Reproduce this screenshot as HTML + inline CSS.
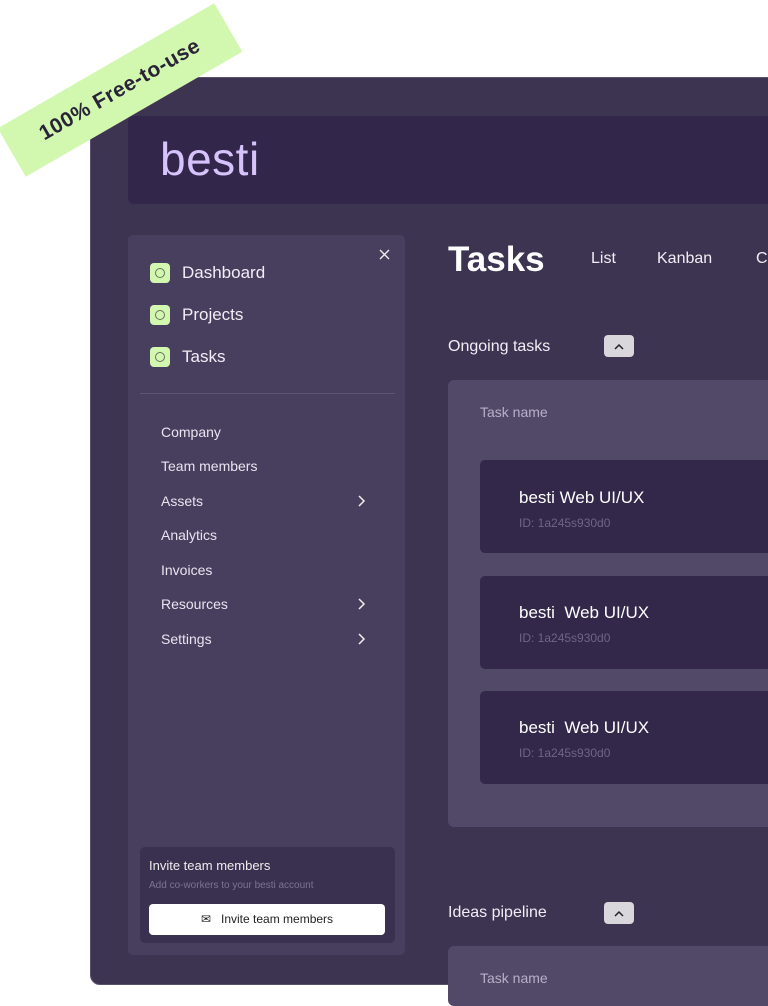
<!DOCTYPE html>
<html><head><style>
*{margin:0;padding:0;box-sizing:border-box}
body{width:768px;height:986px;background:#fff;position:relative;overflow:hidden;font-family:"Liberation Sans",sans-serif}
.a{position:absolute}
.frame{left:90px;top:77px;width:700px;height:908px;background:#3d3452;border-radius:10px;border:1px solid #5a5070}
.hdr{left:128px;top:116px;width:660px;height:88px;background:#32264a;border-radius:6px}
.logo{left:160px;top:132px;font-size:46px;color:#d7c3fb;letter-spacing:0.5px}
.side{left:128px;top:235px;width:277px;height:720px;background:#483f5e;border-radius:5px}
.ic{width:20px;height:20px;background:#d2f8b0;border-radius:4px;display:flex;align-items:center;justify-content:center}
.ic i{width:10px;height:10px;border:1.5px solid #6a7060;border-radius:50%;display:block}
.nav{color:#f1eef6;font-size:17px}
.sub{color:#e8e4f0;font-size:14px;left:161px}
.chev{left:356px}
.pan{left:448px;width:330px;background:#524868;border-radius:6px}
.card{left:480px;width:300px;height:93px;background:#33274a;border-radius:5px}
.ct{color:#fff;font-size:17px;left:519px}
.cid{color:#6f6585;font-size:12px;left:519px}
.tg{width:30px;height:22px;background:#d9d6dc;border-radius:4px;display:flex;align-items:center;justify-content:center}
</style></head><body>
<div class="a frame"></div>
<div class="a hdr"></div>
<div class="a logo">besti</div>
<div class="a side"></div>
<svg class="a" style="left:379px;top:249px" width="11" height="11"><path d="M1 1L10 10M10 1L1 10" stroke="#eee" stroke-width="1.4"/></svg>
<div class="a ic" style="left:150px;top:263px"><i></i></div><div class="a nav" style="left:182px;top:263px">Dashboard</div>
<div class="a ic" style="left:150px;top:305px"><i></i></div><div class="a nav" style="left:182px;top:305px">Projects</div>
<div class="a ic" style="left:150px;top:347px"><i></i></div><div class="a nav" style="left:182px;top:347px">Tasks</div>
<div class="a" style="left:140px;top:393px;width:255px;height:1px;background:#5e5574"></div>
<div class="a sub" style="top:424px">Company</div>
<div class="a sub" style="top:458px">Team members</div>
<div class="a sub" style="top:493px">Assets</div><svg class="a chev" style="top:495px" width="10" height="12"><path d="M3 1L8 6L3 11" stroke="#eee" stroke-width="1.5" fill="none"/></svg>
<div class="a sub" style="top:527px">Analytics</div>
<div class="a sub" style="top:562px">Invoices</div>
<div class="a sub" style="top:596px">Resources</div><svg class="a chev" style="top:598px" width="10" height="12"><path d="M3 1L8 6L3 11" stroke="#eee" stroke-width="1.5" fill="none"/></svg>
<div class="a sub" style="top:631px">Settings</div><svg class="a chev" style="top:633px" width="10" height="12"><path d="M3 1L8 6L3 11" stroke="#eee" stroke-width="1.5" fill="none"/></svg>
<div class="a" style="left:140px;top:847px;width:255px;height:96px;background:#3a3050;border-radius:5px"></div>
<div class="a" style="left:149px;top:858px;color:#eee;font-size:13px">Invite team members</div>
<div class="a" style="left:149px;top:880px;color:#7d7490;font-size:10px">Add co-workers to your besti account</div>
<div class="a" style="left:149px;top:904px;width:236px;height:31px;background:#fff;border-radius:4px;text-align:center;line-height:31px;font-size:12px;color:#222">&#x2709;&nbsp;&nbsp; Invite team members</div>
<div class="a" style="left:448px;top:240px;color:#fff;font-size:35px;font-weight:bold">Tasks</div>
<div class="a" style="left:591px;top:250px;color:#f0eef4;font-size:16px">List</div>
<div class="a" style="left:657px;top:250px;color:#f0eef4;font-size:16px">Kanban</div>
<div class="a" style="left:756px;top:250px;color:#f0eef4;font-size:16px">C</div>
<div class="a" style="left:448px;top:338px;color:#f0eef4;font-size:16px">Ongoing tasks</div>
<div class="a tg" style="left:604px;top:335px"><svg width="10" height="7"><path d="M1 6L5 2L9 6" stroke="#222" stroke-width="1.5" fill="none"/></svg></div>
<div class="a pan" style="top:380px;height:447px"></div>
<div class="a" style="left:480px;top:404px;color:#b8b0c8;font-size:14px">Task name</div>
<div class="a card" style="top:460px"></div><div class="a ct" style="top:488px">besti Web UI/UX</div><div class="a cid" style="top:516px">ID: 1a245s930d0</div>
<div class="a card" style="top:576px"></div><div class="a ct" style="top:603px">besti&nbsp; Web UI/UX</div><div class="a cid" style="top:631px">ID: 1a245s930d0</div>
<div class="a card" style="top:691px"></div><div class="a ct" style="top:718px">besti&nbsp; Web UI/UX</div><div class="a cid" style="top:746px">ID: 1a245s930d0</div>
<div class="a" style="left:448px;top:904px;color:#f0eef4;font-size:16px">Ideas pipeline</div>
<div class="a tg" style="left:604px;top:902px"><svg width="10" height="7"><path d="M1 6L5 2L9 6" stroke="#222" stroke-width="1.5" fill="none"/></svg></div>
<div class="a pan" style="top:946px;height:60px"></div>
<div class="a" style="left:480px;top:970px;color:#b8b0c8;font-size:14px">Task name</div>
<div class="a" style="left:-5px;top:62px;width:250px;height:56px;background:#d2f8b0;transform:rotate(-30deg);color:#2a2238;font-size:21px;font-weight:bold;text-align:center;line-height:56px;letter-spacing:0.5px">100% Free-to-use</div>
</body></html>
